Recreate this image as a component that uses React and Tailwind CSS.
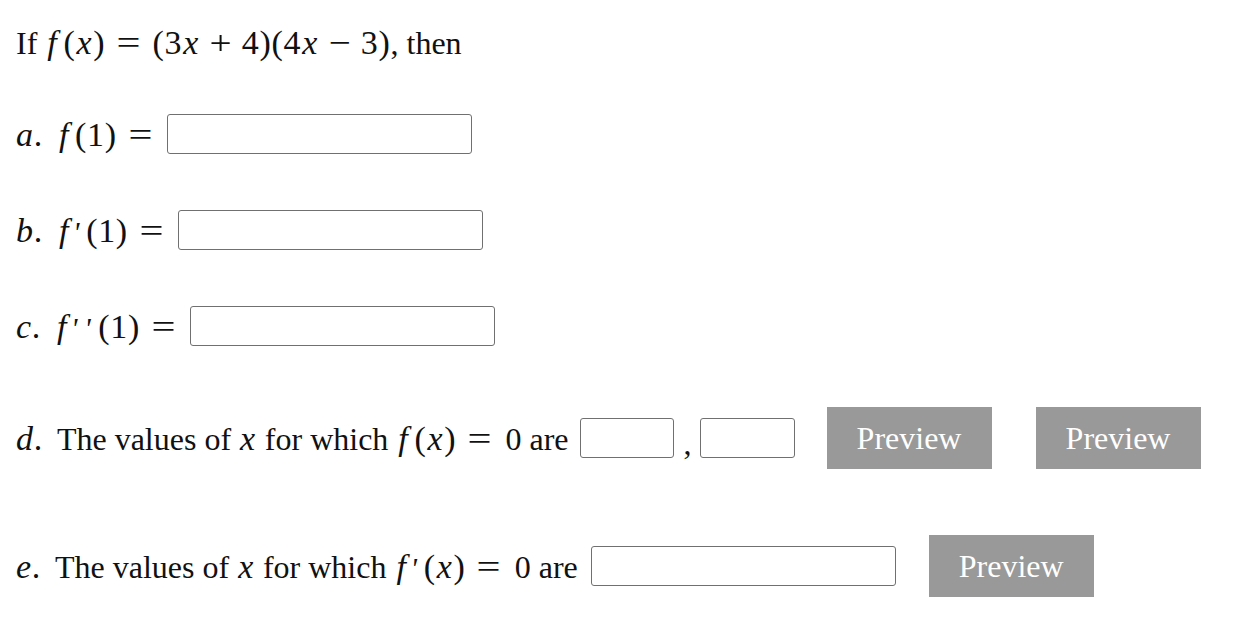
import React from "react";

const M = ({ children, cls = "" }) => (
  <span className={`text-[34px] tracking-[0.02em] ${cls}`}>{children}</span>
);
const F = () => <span className="italic ml-[2px] mr-[6px]">f</span>;
const X = () => <span className="italic px-[1px]">x</span>;
const V = ({ c, cls = "" }) => <span className={`italic ${cls}`}>{c}</span>;
const Pr = ({ n = 1 }) =>
  n === 1 ? (
    <span className="italic mr-[6px] -ml-[2px] text-[30px]">'</span>
  ) : (
    <span className="italic mr-[7px] -ml-[2px] text-[30px]">
      '<span className="ml-[6px]">'</span>
    </span>
  );
const Eq = ({ cls }) => (
  <span className={`inline-block scale-x-[1.25] text-[34px] ${cls}`}>=</span>
);
const Bin = ({ c, cls }) => (
  <span className={`inline-block scale-x-[1.15] text-[34px] ${cls}`}>{c}</span>
);

const Box = ({ w }) => (
  <input
    type="text"
    className={`${w} h-[40px] shrink-0 rounded-[3px] border-[1.5px] border-[#707070] bg-white outline-none`}
  />
);

const PreviewBtn = ({ cls }) => (
  <button
    type="button"
    className={`${cls} w-[165px] h-[62px] shrink-0 bg-[#999999] text-white text-[32px] font-['Liberation_Serif','Times_New_Roman',serif]`}
  >
    Preview
  </button>
);

const Row = ({ cls, children }) => (
  <div className={`flex h-[62px] items-center whitespace-pre ${cls}`}>{children}</div>
);

export default function App() {
  return (
    <div className="min-h-screen bg-white text-[#111] font-['Liberation_Serif','Times_New_Roman',serif] text-[32px] pl-[16px] pt-[11px]">
      {/* Intro line */}
      <Row>
        <span>
          If{" "}
          <M>
            <F />(<X />)
          </M>
          <Eq cls="mx-[14px]" />
          <M>
            (3<X />
            <Bin c="+" cls="mx-[11px]" />
            4)(4<X />
            <Bin c="−" cls="mx-[11px]" />
            3)
          </M>
          , then
        </span>
      </Row>

      {/* a */}
      <Row cls="mt-[30px]">
        <span>
          <M>
            <V c="a" />.
          </M>
          <M cls="ml-[14px]">
            <F />(1)
          </M>
          <Eq cls="ml-[14px] mr-[17px]" />
        </span>
        <Box w="w-[305px]" />
      </Row>

      {/* b */}
      <Row cls="mt-[34px]">
        <span>
          <M>
            <V c="b" />.
          </M>
          <M cls="ml-[14px]">
            <F />
            <Pr />
            (1)
          </M>
          <Eq cls="ml-[14px] mr-[17px]" />
        </span>
        <Box w="w-[305px]" />
      </Row>

      {/* c */}
      <Row cls="mt-[34px]">
        <span>
          <M>
            <V c="c" />.
          </M>
          <M cls="ml-[14px]">
            <F />
            <Pr n={2} />
            (1)
          </M>
          <Eq cls="ml-[14px] mr-[17px]" />
        </span>
        <Box w="w-[305px]" />
      </Row>

      {/* d */}
      <Row cls="mt-[50px]">
        <span>
          <M>
            <V c="d" />.
          </M>
          <span className="ml-[14px]">The values of </span>
          <M>
            <X />
          </M>
          <span> for which </span>
          <M>
            <F />(<X />)
          </M>
          <Eq cls="ml-[14px] mr-[16px]" />
          <span>0 are </span>
        </span>
        <span className="ml-[3px]"></span>
        <Box w="w-[94px]" />
        <span className="ml-[10px] mr-[8px] self-end mb-[10px] leading-none">,</span>
        <Box w="w-[95px]" />
        <PreviewBtn cls="ml-[32px]" />
        <PreviewBtn cls="ml-[44px]" />
      </Row>

      {/* e */}
      <Row cls="mt-[66px]">
        <span>
          <M>
            <V c="e" />.
          </M>
          <span className="ml-[14px]">The values of </span>
          <M>
            <X />
          </M>
          <span> for which </span>
          <M>
            <F />
            <Pr />(<X />)
          </M>
          <Eq cls="ml-[14px] mr-[16px]" />
          <span>0 are </span>
        </span>
        <span className="ml-[5px]"></span>
        <Box w="w-[305px]" />
        <PreviewBtn cls="ml-[33px]" />
      </Row>
    </div>
  );
}
